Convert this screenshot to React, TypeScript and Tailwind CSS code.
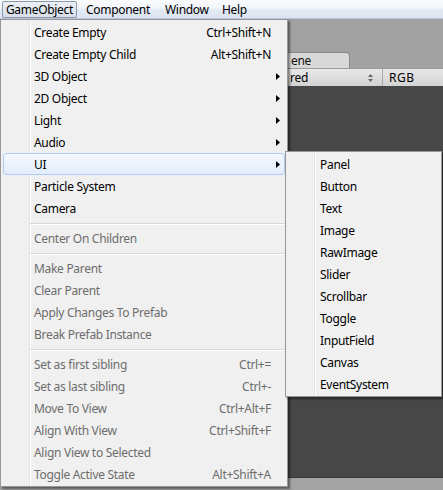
import React from "react";

type Item =
  | "sep"
  | { t: string; s?: string; arrow?: boolean; hl?: boolean; d?: boolean };

const mainItems: Item[] = [
  { t: "Create Empty", s: "Ctrl+Shift+N" },
  { t: "Create Empty Child", s: "Alt+Shift+N" },
  { t: "3D Object", arrow: true },
  { t: "2D Object", arrow: true },
  { t: "Light", arrow: true },
  { t: "Audio", arrow: true },
  { t: "UI", arrow: true, hl: true },
  { t: "Particle System" },
  { t: "Camera" },
  "sep",
  { t: "Center On Children", d: true },
  "sep",
  { t: "Make Parent", d: true },
  { t: "Clear Parent", d: true },
  { t: "Apply Changes To Prefab", d: true },
  { t: "Break Prefab Instance", d: true },
  "sep",
  { t: "Set as first sibling", s: "Ctrl+=", d: true },
  { t: "Set as last sibling", s: "Ctrl+-", d: true },
  { t: "Move To View", s: "Ctrl+Alt+F", d: true },
  { t: "Align With View", s: "Ctrl+Shift+F", d: true },
  { t: "Align View to Selected", d: true },
  { t: "Toggle Active State", s: "Alt+Shift+A", d: true },
];

const subItems = [
  "Panel",
  "Button",
  "Text",
  "Image",
  "RawImage",
  "Slider",
  "Scrollbar",
  "Toggle",
  "InputField",
  "Canvas",
  "EventSystem",
];

function Arrow() {
  return (
    <svg width="4" height="7" viewBox="0 0 4 7" className="block">
      <path d="M0 0 L4 3.5 L0 7 Z" fill="#000" />
    </svg>
  );
}

function MenuRow({ it }: { it: Exclude<Item, "sep"> }) {
  return (
    <div
      className={
        "mx-[2px] h-[22px] flex items-center pt-[1px] rounded-[3px] border " +
        (it.hl
          ? "border-[#aeccf1] bg-[linear-gradient(to_bottom,#f3f8fe,#e2edfb)]"
          : "border-transparent")
      }
    >
      <span
        className={
          "flex-1 pl-[30px] whitespace-nowrap " +
          (it.d ? "text-[#6d6d6d]" : "text-black")
        }
      >
        {it.t}
      </span>
      {it.s && (
        <span
          className={
            "whitespace-nowrap " + (it.d ? "text-[#6d6d6d]" : "text-black")
          }
        >
          {it.s}
        </span>
      )}
      <span className="w-[13px] flex items-center pl-[5px]">
        {it.arrow && <Arrow />}
      </span>
    </div>
  );
}

export default function App() {
  return (
    <div
      className="relative w-[443px] h-[490px] overflow-hidden flex flex-col text-[12px] leading-none tracking-[-0.3px]"
      style={{ fontFamily: "'Noto Sans', 'Open Sans', sans-serif" }}
    >
      {/* Menu bar */}
      <div className="h-[19px] flex items-stretch bg-[linear-gradient(to_bottom,#fafbfd_0%,#f2f5fa_45%,#e2e9f4_55%,#dbe4f1_100%)] border-b border-[#b8c6d9]">
        <div className="ml-[2px] mt-[1px] h-[17px] w-[75px] pt-[1px] flex items-center justify-center rounded-[2px] border border-[#8d99a8] bg-[linear-gradient(to_bottom,#edf1f6,#d7dee8)]">
          GameObject
        </div>
        <div className="pl-[9px] pt-[2px] w-[88px] flex items-center">Component</div>
        <div className="pt-[2px] w-[57px] flex items-center">Window</div>
        <div className="pt-[2px] flex items-center">Help</div>
      </div>

      {/* Editor background */}
      <div className="h-[49px] bg-[#a2a2a2] flex items-end">
        <div className="ml-[240px] w-[110px] h-[16px] rounded-tr-[4px] border border-b-0 border-[#8a8a8a] bg-[#d8d8d8] flex items-center pl-[50px] pt-[1px] text-[#111]">
          ene
        </div>
      </div>
      <div className="h-[18px] flex items-center bg-[linear-gradient(to_bottom,#e8e8e8,#d2d2d2)] border-t border-[#9a9a9a]">
        <div className="ml-[290px] w-[93px] flex items-center justify-between pr-[9px] h-full border-r border-[#a8a8a8]">
          <span className="pt-[1px]">red</span>
          <svg width="5" height="8" viewBox="0 0 5 8" className="block">
            <path d="M0 3 L2.5 0 L5 3 Z M0 5 L2.5 8 L5 5 Z" fill="#666" />
          </svg>
        </div>
        <div className="pl-[6px] pt-[1px] tracking-[0.5px]">RGB</div>
      </div>
      <div className="flex-1 bg-[#474747] border-b border-[#3a3a3a]" />
      <div className="h-[12px] bg-[#a4a4a4]" />

      {/* Main dropdown menu */}
      <div className="absolute left-0 top-[19px] w-[288px] border border-[#979797] bg-[#f0f0f0] py-[1px] shadow-[2px_2px_2px_rgba(0,0,0,0.45)]">
        <div className="absolute left-[28px] top-0 bottom-0 w-[2px] border-l border-[#e2e3e3] border-r border-r-white" />
        <div className="relative flex flex-col">
          {mainItems.map((it, i) =>
            it === "sep" ? (
              <div key={i} className="h-[8px] pt-[4px] pl-[29px] pr-[1px]">
                <div className="h-[2px] border-t border-[#d7d7d7] border-b border-b-white" />
              </div>
            ) : (
              <MenuRow key={i} it={it} />
            )
          )}
        </div>
      </div>

      {/* UI submenu */}
      <div className="absolute left-[285px] top-[151px] w-[157px] border border-[#979797] bg-[#f0f0f0] py-[1px] shadow-[2px_2px_2px_rgba(0,0,0,0.45)]">
        <div className="absolute left-[28px] top-0 bottom-0 w-[2px] border-l border-[#e2e3e3] border-r border-r-white" />
        <div className="relative flex flex-col">
          {subItems.map((s) => (
            <div
              key={s}
              className="mx-[2px] h-[22px] pt-[1px] flex items-center border border-transparent pl-[31px] whitespace-nowrap"
            >
              {s}
            </div>
          ))}
        </div>
      </div>
    </div>
  );
}
